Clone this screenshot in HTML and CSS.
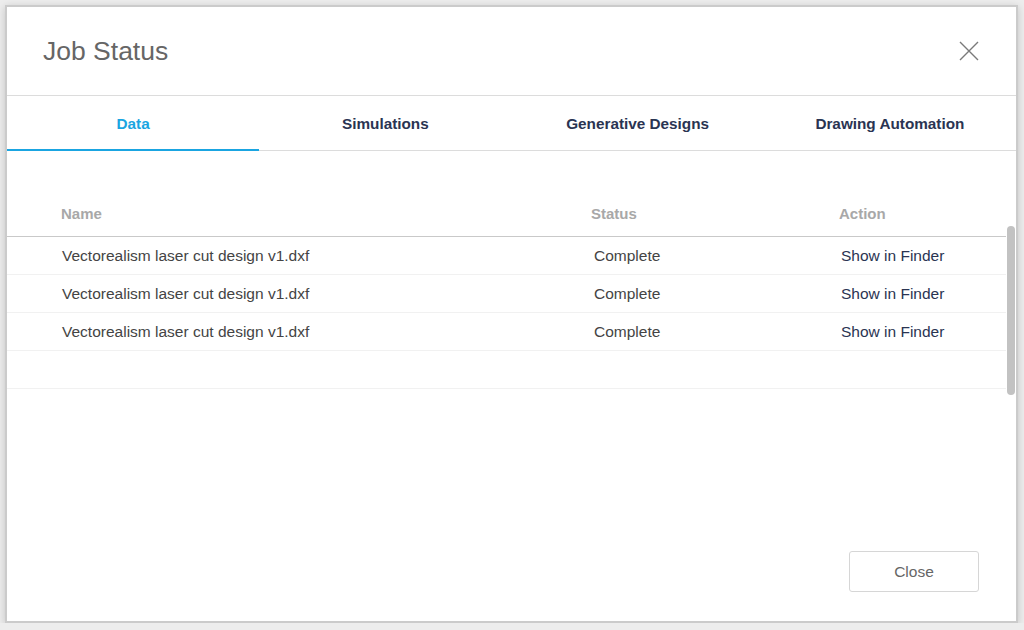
FILE: index.html
```html
<!DOCTYPE html>
<html>
<head>
  <title>Job Status</title>
  <link rel="stylesheet" href="styles.css">
</head>
<body>
  <div class="dialog">
    <div class="dialog-header">
      <h1>Job Status</h1>
      <button class="icon-close" aria-label="Close">
        <svg width="20" height="20" viewBox="0 0 20 20"><path d="M1 1 L19 19 M19 1 L1 19" stroke="#7a7a7a" stroke-width="1.4" fill="none"/></svg>
      </button>
    </div>

    <div class="tabs">
      <div class="tab active">Data</div>
      <div class="tab">Simulations</div>
      <div class="tab">Generative Designs</div>
      <div class="tab">Drawing Automation</div>
    </div>

    <div class="dialog-body">
      <div class="table">
        <div class="row head">
          <div>Name</div>
          <div>Status</div>
          <div>Action</div>
        </div>
        <div class="row">
          <div>Vectorealism laser cut design v1.dxf</div>
          <div>Complete</div>
          <div class="action">Show in Finder</div>
        </div>
        <div class="row">
          <div>Vectorealism laser cut design v1.dxf</div>
          <div>Complete</div>
          <div class="action">Show in Finder</div>
        </div>
        <div class="row">
          <div>Vectorealism laser cut design v1.dxf</div>
          <div>Complete</div>
          <div class="action">Show in Finder</div>
        </div>
        <div class="row empty"></div>
      </div>
      <div class="scrollbar"></div>
    </div>

    <div class="dialog-footer">
      <button class="btn">Close</button>
    </div>
  </div>
</body>
</html>
```

FILE: styles.css
```css
* { box-sizing: border-box; }
body { margin: 0; background: #ededed; font-family: "Liberation Sans", Arial, sans-serif; }

.dialog { position: relative; margin: 5px 0 0 5px; width: 1013px; height: 618px; background: #fff; border: 2px solid #cbcbcb; box-shadow: 0 2px 8px rgba(0,0,0,0.18); display: flex; flex-direction: column; }

.dialog-header { height: 89px; border-bottom: 1px solid #dcdcdc; display: flex; align-items: center; justify-content: space-between; padding: 0 37px 0 36px; }
.dialog-header h1 { margin: 0; font-size: 26.5px; font-weight: normal; color: #666; }
.icon-close { background: none; border: none; padding: 0; width: 20px; height: 20px; cursor: pointer; }
.icon-close svg { display: block; }

.tabs { display: flex; border-bottom: 1px solid #dcdcdc; }
.tab { flex: 1; height: 55px; padding-top: 3px; display: flex; align-items: center; justify-content: center; font-size: 15.3px; font-weight: bold; color: #2a3452; border-bottom: 2px solid transparent; margin-bottom: -1px; }
.tab.active { color: #1aa5e1; border-bottom-color: #1aa5e1; }

.dialog-body { flex: 1; position: relative; padding-top: 38px; }
.table { margin-right: 10px; }
.row { display: grid; grid-template-columns: 532px 247px 1fr; padding-left: 55px; padding-top: 1px; height: 38px; align-items: center; border-bottom: 1px solid #f1f1f1; font-size: 15.5px; color: #444; }
.row .action { color: #2a3452; }
.row.head { grid-template-columns: 530px 248px 1fr; height: 48px; align-items: start; padding-top: 16px; padding-left: 54px; border-bottom-color: #c9c9c9; font-size: 15px; font-weight: bold; color: #a8a8a8; }
.scrollbar { position: absolute; right: 1px; top: 75px; width: 8px; height: 169px; border-radius: 4px; background: #c2c2c2; }

.dialog-footer { display: flex; justify-content: flex-end; padding: 0 37px 29px 0; }
.btn { width: 130px; height: 41px; background: #fff; border: 1px solid #d6d6d6; border-radius: 3px; font-family: inherit; font-size: 15.5px; color: #666; cursor: pointer; }
```
